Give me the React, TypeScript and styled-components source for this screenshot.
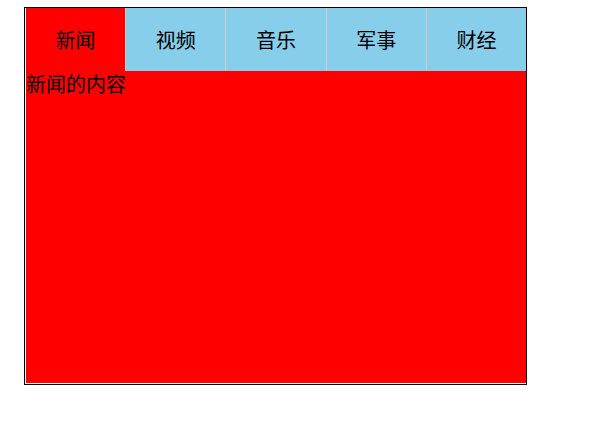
import React, { useState } from "react";
import styled, { createGlobalStyle } from "styled-components";

const Global = createGlobalStyle`
  html, body { margin: 0; padding: 0; background: #fff; }
  body { font-family: "Noto Sans CJK SC", "Noto Sans", sans-serif; }
`;

const Box = styled.div`
  margin: 7px 0 0 24px;
  width: 500px;
  border: 1px solid #000;
  padding: 0 0 1px 1px;
  box-sizing: content-box;
  background: #fff;
  display: flex;
  flex-direction: column;
`;

const Tabs = styled.ul`
  list-style: none;
  margin: 0;
  padding: 0;
  display: flex;
  height: 63px;
`;

const Tab = styled.li<{ $active: boolean; $first: boolean }>`
  flex: 1;
  display: flex;
  align-items: center;
  justify-content: center;
  font-size: 20px;
  color: #000;
  background: ${(p) => (p.$active ? "#ff0000" : "#87ceeb")};
  border-left: ${(p) => (p.$first ? "none" : "1px solid #cfcfcf")};
  cursor: pointer;
`;

const Content = styled.div`
  height: 312px;
  background: #ff0000;
  font-size: 20px;
  line-height: 26px;
  box-sizing: border-box;
  color: #000;
`;

const tabs = ["新闻", "视频", "音乐", "军事", "财经"];

export default function App() {
  const [active, setActive] = useState(0);
  return (
    <>
      <Global />
      <Box>
        <Tabs>
          {tabs.map((t, i) => (
            <Tab key={t} $active={i === active} $first={i === 0} onClick={() => setActive(i)}>
              {t}
            </Tab>
          ))}
        </Tabs>
        <Content>{tabs[active]}的内容</Content>
      </Box>
    </>
  );
}
